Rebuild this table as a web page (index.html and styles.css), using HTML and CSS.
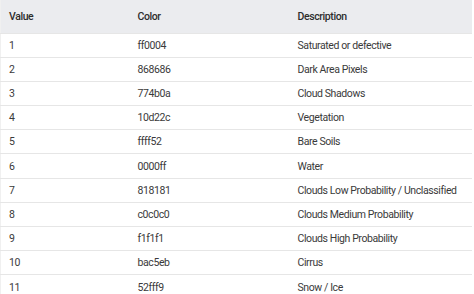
FILE: index.html
```html
<!DOCTYPE html>
<html lang="en">
<head>
    <meta charset="UTF-8">
    <title>Scene Classification</title>
    <link rel="stylesheet" href="styles.css">
</head>
<body>
    <table class="scl-table">
        <colgroup>
            <col class="col-value">
            <col class="col-color">
            <col class="col-desc">
        </colgroup>
        <thead>
            <tr>
                <th>Value</th>
                <th>Color</th>
                <th>Description</th>
            </tr>
        </thead>
        <tbody>
            <tr><td>1</td><td>ff0004</td><td>Saturated or defective</td></tr>
            <tr><td>2</td><td>868686</td><td>Dark Area Pixels</td></tr>
            <tr><td>3</td><td>774b0a</td><td>Cloud Shadows</td></tr>
            <tr><td>4</td><td>10d22c</td><td>Vegetation</td></tr>
            <tr><td>5</td><td>ffff52</td><td>Bare Soils</td></tr>
            <tr><td>6</td><td>0000ff</td><td>Water</td></tr>
            <tr><td>7</td><td>818181</td><td>Clouds Low Probability / Unclassified</td></tr>
            <tr><td>8</td><td>c0c0c0</td><td>Clouds Medium Probability</td></tr>
            <tr><td>9</td><td>f1f1f1</td><td>Clouds High Probability</td></tr>
            <tr><td>10</td><td>bac5eb</td><td>Cirrus</td></tr>
            <tr><td>11</td><td>52fff9</td><td>Snow / Ice</td></tr>
        </tbody>
    </table>
</body>
</html>
```

FILE: styles.css
```css
* {
    margin: 0;
    padding: 0;
    box-sizing: border-box;
}

body {
    font-family: Roboto, "Noto Sans", sans-serif;
    background: #fff;
    color: #333;
    overflow: hidden;
}

.scl-table {
    width: 472px;
    border-collapse: collapse;
    table-layout: fixed;
    font-size: 10.5px;
    letter-spacing: -0.4px;
    border-left: 1px solid #f0f0f0;
}

.col-value {
    width: 129px;
}

.col-color {
    width: 160px;
}

th {
    background: #ebecef;
    height: 33px;
    font-weight: 500;
    text-align: left;
    padding: 0 8px;
    color: #2d2d2d;
}

td {
    height: 24.2px;
    padding: 0 8px;
    border-top: 1px solid #e6e6e6;
    color: #3a3a3a;
    white-space: nowrap;
}
```
